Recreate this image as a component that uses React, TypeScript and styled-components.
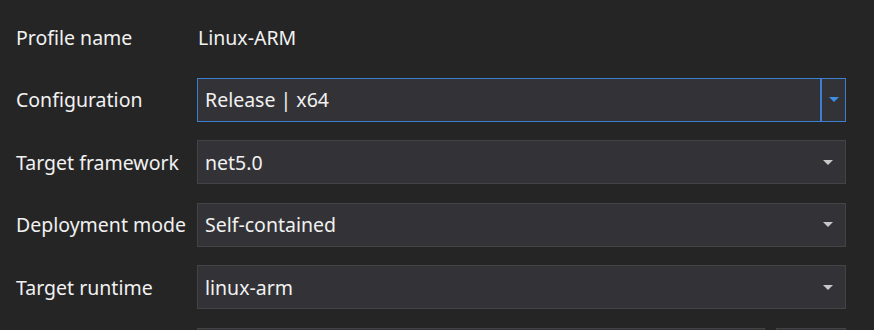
import { Fragment } from 'react';
import styled, { createGlobalStyle } from 'styled-components';

const GlobalStyle = createGlobalStyle`
  html, body {
    margin: 0;
    padding: 0;
    background: #252526;
    overflow: hidden;
  }
`;

const Page = styled.main`
  width: 874px;
  height: 330px;
  background: #252526;
  color: #f1f1f1;
  font-family: 'Noto Sans', 'Open Sans', sans-serif;
  font-size: 19.5px;
  box-sizing: border-box;
  padding: 15px 28px 0 16px;
  overflow: hidden;
`;

const Form = styled.div`
  display: grid;
  grid-template-columns: 181px 1fr;
  grid-auto-rows: 44px;
  row-gap: 18.5px;
`;

const Label = styled.div`
  display: flex;
  align-items: center;
  white-space: nowrap;
  color: #f1f1f1;
`;

const Value = styled.div`
  display: flex;
  align-items: center;
  padding-left: 1px;
`;

const Combo = styled.div<{ $focused?: boolean }>`
  display: flex;
  align-items: stretch;
  background: #333337;
  border: 1px solid ${(p) => (p.$focused ? '#3a7fd0' : '#434346')};
  box-sizing: border-box;
  height: 44px;
`;

const ComboText = styled.div`
  flex: 1;
  display: flex;
  align-items: center;
  padding-left: 7px;
`;

const ComboButton = styled.div<{ $focused?: boolean }>`
  width: 23px;
  display: flex;
  align-items: center;
  justify-content: center;
  border-left: ${(p) => (p.$focused ? '2px solid #3a7fd0' : 'none')};
  margin-right: ${(p) => (p.$focused ? '0' : '6px')};
`;

const Arrow = styled.div<{ $focused?: boolean }>`
  width: 0;
  height: 0;
  border-left: 5px solid transparent;
  border-right: 5px solid transparent;
  border-top: 5px solid ${(p) => (p.$focused ? '#3d8ee6' : '#c8c8c8')};
`;

const SplitRow = styled.div`
  display: flex;
  gap: 11px;
`;

const TextBox = styled.div`
  flex: 1;
  background: #333337;
  border: 1px solid #434346;
  height: 44px;
  box-sizing: border-box;
`;

const SmallButton = styled.div`
  width: 70px;
  background: #333337;
  border: 1px solid #434346;
  height: 44px;
  box-sizing: border-box;
`;

const rows = [
  { label: 'Configuration', value: 'Release | x64', focused: true },
  { label: 'Target framework', value: 'net5.0' },
  { label: 'Deployment mode', value: 'Self-contained' },
  { label: 'Target runtime', value: 'linux-arm' },
];

const App = () => {
  return (
    <Page>
      <GlobalStyle />
      <Form>
        <Label>Profile name</Label>
        <Value>Linux-ARM</Value>
        {rows.map((r) => (
          <Fragment key={r.label}>
            <Label>{r.label}</Label>
            <Combo $focused={r.focused}>
              <ComboText>{r.value}</ComboText>
              <ComboButton $focused={r.focused}>
                <Arrow $focused={r.focused} />
              </ComboButton>
            </Combo>
          </Fragment>
        ))}
        <Label />
        <SplitRow>
          <TextBox />
          <SmallButton />
        </SplitRow>
      </Form>
    </Page>
  );
};

export default App;
